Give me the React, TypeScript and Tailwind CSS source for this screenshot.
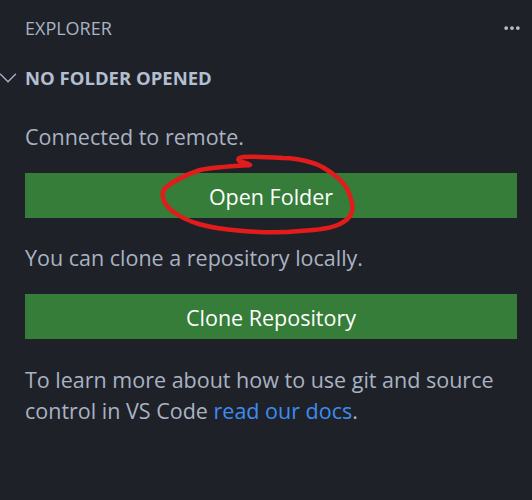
import { ChevronDown, Ellipsis } from "lucide-react";

function Scribble() {
  return (
    <svg
      className="pointer-events-none absolute left-0 top-0"
      width="532"
      height="500"
      viewBox="0 0 532 500"
      fill="none"
    >
      <path
        d="M250 165 C232 166 212 167 200 170 C188 174 175 180 165 188 C160 194 163 205 175 213 C188 222 205 228 243 231 C270 233 290 232 300 231 C320 230 332 228 340 224 C350 219 354 212 352 203 C350 193 345 183 337 177 C328 170 320 165 313 163 C300 159 290 158 283 158 C268 157 252 156 243 157 C236 158 238 161 242 162 C246 163 249 164 250 165"
        stroke="#e21b1b"
        strokeWidth="4.5"
        strokeLinecap="round"
        strokeLinejoin="round"
      />
    </svg>
  );
}

export default function App() {
  return (
    <div className="relative h-[500px] w-[532px] overflow-hidden bg-[#1f2129] font-['Open_Sans',sans-serif] text-[#a9b3c2]">
      <div className="flex h-[56px] items-center justify-between pl-[25px] pr-[10px]">
        <span className="text-[18px]">EXPLORER</span>
        <Ellipsis className="h-5 w-5 text-[#b7c3d3]" strokeWidth={2.5} />
      </div>

      <div className="flex h-[44px] items-center">
        <ChevronDown className="-ml-[7px] mr-[2px] h-[30px] w-[30px]" strokeWidth={1.1} />
        <span className="text-[18.5px] font-bold text-[#b3bfcf]">NO FOLDER OPENED</span>
      </div>

      <div className="pl-[25px] pr-[15px] text-[21.5px]">
        <p className="mt-[22px] leading-[30px]">Connected to remote.</p>
        <button className="mt-[21px] flex h-[45px] w-full items-center justify-center bg-[#357d39] pt-[3px] text-white">
          Open Folder
        </button>
        <p className="mt-[25px] leading-[30px]">You can clone a repository locally.</p>
        <button className="mt-[21px] flex h-[45px] w-full items-center justify-center bg-[#357d39] pt-[3px] text-white">
          Clone Repository
        </button>
        <p className="mt-[25px] leading-[31px]">
          To learn more about how to use git and source control in VS Code{" "}
          <a className="text-[#3d8cf0]">read our docs</a>.
        </p>
      </div>

      <Scribble />
    </div>
  );
}
